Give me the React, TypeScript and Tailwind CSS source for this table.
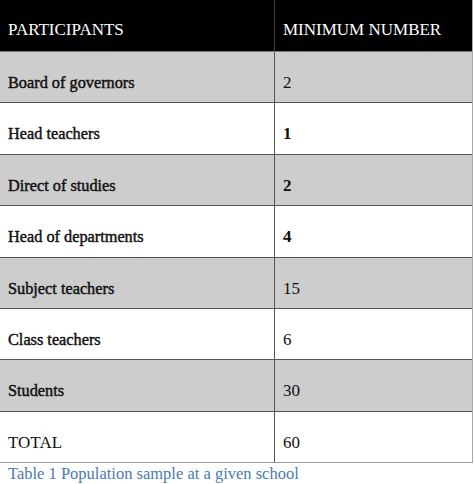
const rows = [
  { label: "Board of governors", value: "2", strong: false, shade: true },
  { label: "Head teachers", value: "1", strong: true, shade: false },
  { label: "Direct of studies", value: "2", strong: true, shade: true },
  { label: "Head of departments", value: "4", strong: true, shade: false },
  { label: "Subject teachers", value: "15", strong: false, shade: true },
  { label: "Class teachers", value: "6", strong: false, shade: false },
  { label: "Students", value: "30", strong: false, shade: true },
];

export default function App() {
  return (
    <div className="w-[474px] h-[484px] bg-white font-['Liberation_Serif',serif] text-[#111] overflow-hidden">
      <div className="w-[473px] border-r border-[#a8a8a8]">
        <div className="grid grid-cols-[275px_1fr] h-[52px] bg-black text-white text-[17px] border-b border-[#777]">
          <div className="flex items-center pl-2 pt-[9px] border-r border-[#444]">PARTICIPANTS</div>
          <div className="flex items-center pl-2 pt-[9px]">MINIMUM NUMBER</div>
        </div>

        {rows.map((row) => (
          <div
            key={row.label}
            className={`grid grid-cols-[275px_1fr] h-[51.4px] text-[17px] border-b border-[#555] ${
              row.shade ? "bg-[#cdcdcd]" : "bg-white"
            }`}
          >
            <div className="flex items-center pl-2 pt-[12px] text-[16.3px] [-webkit-text-stroke:0.45px_#111] border-r border-[#555]">
              {row.label}
            </div>
            <div className={`flex items-center pl-2 pt-[11px] ${row.strong ? "font-bold" : ""}`}>
              {row.value}
            </div>
          </div>
        ))}

        <div className="grid grid-cols-[275px_1fr] h-[51.4px] text-[17px] bg-white border-b border-[#9a9a9a]">
          <div className="flex items-center pl-2 pt-[11px] border-r border-[#555]">TOTAL</div>
          <div className="flex items-center pl-2 pt-[11px]">60</div>
        </div>
      </div>

      <p className="pl-2 pt-[1px] text-[16.5px] leading-5 text-[#4a7ab5]">
        Table 1 Population sample at a given school
      </p>
    </div>
  );
}
